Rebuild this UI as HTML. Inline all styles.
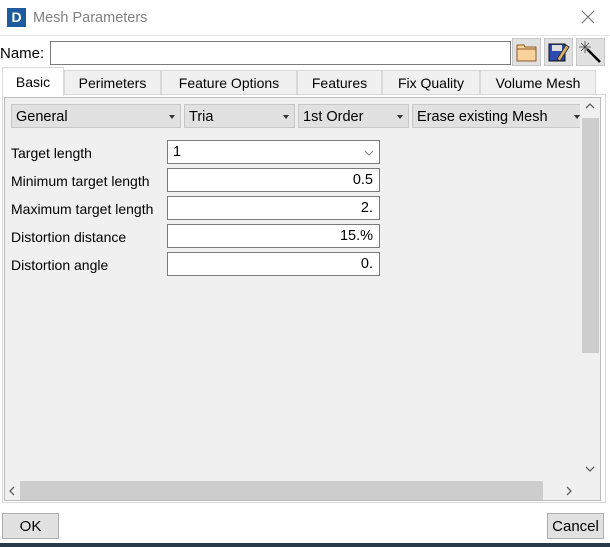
<!DOCTYPE html>
<html><head><style>
*{box-sizing:border-box;margin:0;padding:0}
body{width:610px;height:547px;background:#fff;font-family:"Liberation Sans",sans-serif;font-size:14px;color:#000;position:relative;overflow:hidden}
.a{position:absolute}
.tab{position:absolute;top:70px;height:25px;border:1px solid #d9d9d9;border-bottom:none;background:#f0f0f0;text-align:center;line-height:25px;font-size:14px}
.combo{position:absolute;top:104px;height:24px;background:#e1e1e1;border:1px solid #c8c8c8;padding-left:4px;line-height:24px;font-size:14.5px}
.combo .ar{position:absolute;right:5px;top:10px;width:0;height:0;border-left:3.5px solid transparent;border-right:3.5px solid transparent;border-top:4px solid #333}
.lbl{position:absolute;left:11px;font-size:14px}
.fld{position:absolute;left:167px;width:213px;height:24px;background:#fff;border:1px solid #7a7a7a;text-align:right;padding-right:6px;line-height:23px;font-size:14.5px}
.btn{position:absolute;top:513px;height:26px;background:#e1e1e1;border:1px solid #adadad;text-align:center;line-height:26px;font-size:15px}
.ib{position:absolute;top:38px;width:29px;height:28px;background:#e1e1e1;border:1px solid #c8c8c8}
</style></head><body>
<div class="a" style="left:7px;top:8px;width:19px;height:19px;background:#1c5c9e;color:#fff;font-weight:bold;font-size:14px;line-height:19px;text-align:center">D</div>
<div class="a" style="left:33px;top:10px;font-size:14.5px;color:#808080">Mesh Parameters</div>
<svg class="a" style="left:581px;top:10px" width="14" height="14"><path d="M1 1L13 13M13 1L1 13" stroke="#777" stroke-width="1.2"/></svg>
<div class="a" style="left:0;top:35px;width:610px;height:1px;background:#e6e6e6"></div>
<div class="a" style="left:0;top:45px;font-size:15px">Name:</div>
<div class="a" style="left:50px;top:41px;width:461px;height:24px;border:1px solid #7a7a7a;background:#fff"></div>
<div class="ib" style="left:512px"><svg width="27" height="26"><path d="M4 6h7l1 2h11v14H4z" fill="#f9d39b" stroke="#8a5a2a"/><path d="M4 10h19" stroke="#8a5a2a"/></svg></div>
<div class="ib" style="left:544px"><svg width="27" height="26"><path d="M4 5h16v17H4z" fill="#2b4bb0" stroke="#111"/><path d="M7 6h10v6H7z" fill="#ddd"/><path d="M12 20L21 6l3 2-9 14z" fill="#d9b36b" stroke="#333"/></svg></div>
<div class="ib" style="left:576px"><svg width="27" height="26"><path d="M10 10L23 23" stroke="#000" stroke-width="2.5"/><path d="M8 2v12M2 8h12M4 4l8 8M12 4l-8 8" stroke="#444" stroke-width=".8"/></svg></div>
<div class="tab" style="left:64px;width:97px">Perimeters</div>
<div class="tab" style="left:161px;width:136px">Feature Options</div>
<div class="tab" style="left:297px;width:85px">Features</div>
<div class="tab" style="left:382px;width:98px">Fix Quality</div>
<div class="tab" style="left:480px;width:116px">Volume Mesh</div>
<div class="a" style="left:2px;top:94px;width:604px;height:409px;border:1px solid #d9d9d9;background:#fff"></div>
<div class="tab" style="left:2px;top:67px;width:62px;height:29px;background:#fff;border-color:#d9d9d9;line-height:28px">Basic</div>
<div class="a" style="left:4px;top:97px;width:597px;height:404px;border:1px solid #bcbcbc;background:#f0f0f0"></div>
<div class="combo" style="left:11px;width:170px">General<span class="ar"></span></div>
<div class="combo" style="left:184px;width:111px">Tria<span class="ar"></span></div>
<div class="combo" style="left:298px;width:111px">1st Order<span class="ar"></span></div>
<div class="combo" style="left:412px;width:168px;border-right:none">Erase existing Mesh<span class="ar" style="right:0"></span></div>
<div class="lbl" style="top:145px">Target length</div>
<div class="lbl" style="top:173px">Minimum target length</div>
<div class="lbl" style="top:201px">Maximum target length</div>
<div class="lbl" style="top:229px">Distortion distance</div>
<div class="lbl" style="top:257px">Distortion angle</div>
<div class="fld" style="top:140px;text-align:left;padding-left:5px">1<svg class="a" style="right:5px;top:9px" width="10" height="6"><path d="M1 1l4 4 4-4" fill="none" stroke="#888"/></svg></div>
<div class="fld" style="top:168px">0.5</div>
<div class="fld" style="top:196px">2.</div>
<div class="fld" style="top:224px">15.%</div>
<div class="fld" style="top:252px">0.</div>
<div class="a" style="left:580px;top:98px;width:20px;height:382px;background:#f0f0f0"></div>
<div class="a" style="left:582px;top:118px;width:17px;height:235px;background:#cdcdcd"></div>
<svg class="a" style="left:585px;top:103px" width="10" height="6"><path d="M1 5l4-4 4 4" fill="none" stroke="#606060" stroke-width="1.3"/></svg>
<svg class="a" style="left:585px;top:466px" width="10" height="6"><path d="M1 1l4 4 4-4" fill="none" stroke="#606060" stroke-width="1.3"/></svg>
<div class="a" style="left:5px;top:480px;width:595px;height:20px;background:#f0f0f0"></div>
<div class="a" style="left:20px;top:481px;width:523px;height:19px;background:#cdcdcd"></div>
<svg class="a" style="left:9px;top:486px" width="6" height="10"><path d="M5 1L1 5l4 4" fill="none" stroke="#606060" stroke-width="1.3"/></svg>
<svg class="a" style="left:566px;top:486px" width="6" height="10"><path d="M1 1l4 4-4 4" fill="none" stroke="#606060" stroke-width="1.3"/></svg>
<div class="btn" style="left:2px;width:57px">OK</div>
<div class="btn" style="left:547px;width:57px">Cancel</div>
<div class="a" style="left:0;top:543px;width:610px;height:4px;background:#2b3a4a"></div>
</body></html>
